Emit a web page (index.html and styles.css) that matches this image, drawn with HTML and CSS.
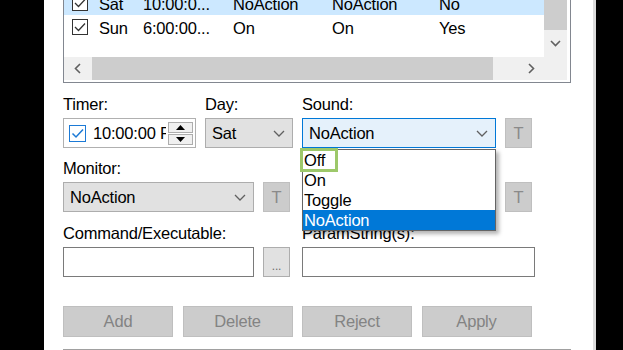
FILE: index.html
```html
<!DOCTYPE html>
<html lang="en">
<head>
  <meta charset="UTF-8" />
  <title>Timer Actions</title>
  <link rel="stylesheet" href="styles.css">
</head>
<body>
  <div class="window">
    <div class="list">
      <div class="rows">
        <div class="row selected">
          <span class="check"><svg width="16" height="16" viewBox="0 0 16 16"><rect x="0.5" y="0.5" width="15" height="15" fill="#fff" stroke="#333"/><polyline points="3,8 6.5,11.5 13,4.5" fill="none" stroke="#333" stroke-width="1.3"/></svg></span>
          <span class="c-day">Sat</span>
          <span class="c-time">10:00:0...</span>
          <span class="c-a1">NoAction</span>
          <span class="c-a2">NoAction</span>
          <span>No</span>
        </div>
        <div class="row">
          <span class="check"><svg width="16" height="16" viewBox="0 0 16 16"><rect x="0.5" y="0.5" width="15" height="15" fill="#fff" stroke="#333"/><polyline points="3,8 6.5,11.5 13,4.5" fill="none" stroke="#333" stroke-width="1.3"/></svg></span>
          <span class="c-day">Sun</span>
          <span class="c-time">6:00:00...</span>
          <span class="c-a1">On</span>
          <span class="c-a2">On</span>
          <span>Yes</span>
        </div>
      </div>
      <div class="vscroll">
        <div class="vthumb"></div>
        <div class="varrow"><svg width="11" height="7" viewBox="0 0 11 7"><polyline points="1,1 5.5,5.5 10,1" fill="none" stroke="#606060" stroke-width="1.6"/></svg></div>
      </div>
      <div class="hscroll">
        <div class="harrow"><svg width="7" height="11" viewBox="0 0 7 11"><polyline points="6,1 1.5,5.5 6,10" fill="none" stroke="#606060" stroke-width="1.6"/></svg></div>
        <div class="hthumb"></div>
        <div class="htrack"></div>
        <div class="harrow"><svg width="7" height="11" viewBox="0 0 7 11"><polyline points="1,1 5.5,5.5 1,10" fill="none" stroke="#606060" stroke-width="1.6"/></svg></div>
      </div>
      <div class="corner"></div>
    </div>

    <div class="form-row first">
      <div class="field w-timer">
        <label>Timer:</label>
        <div class="picker">
          <span class="picker-check"><svg width="17" height="17" viewBox="0 0 17 17"><rect x="0.5" y="0.5" width="16" height="16" fill="#fff" stroke="#1c7ad6"/><polyline points="3.5,8.5 7,12 14,4.5" fill="none" stroke="#1c7ad6" stroke-width="1.5"/></svg></span>
          <span class="picker-text">10:00:00 PM</span>
          <span class="spin">
            <span class="spin-btn"><svg width="9" height="5" viewBox="0 0 9 5"><polygon points="0,5 4.5,0 9,5" fill="#000"/></svg></span>
            <span class="spin-btn"><svg width="9" height="5" viewBox="0 0 9 5"><polygon points="0,0 4.5,5 9,0" fill="#000"/></svg></span>
          </span>
        </div>
      </div>
      <div class="field w-day">
        <label>Day:</label>
        <div class="combo">
          <span>Sat</span>
          <svg class="chev" width="12" height="7" viewBox="0 0 12 7"><polyline points="1,1 6,6 11,1" fill="none" stroke="#606060" stroke-width="1.3"/></svg>
        </div>
      </div>
      <div class="field w-sound">
        <label>Sound:</label>
        <div class="combo open">
          <span>NoAction</span>
          <svg class="chev" width="12" height="7" viewBox="0 0 12 7"><polyline points="1,1 6,6 11,1" fill="none" stroke="#606060" stroke-width="1.3"/></svg>
          <ul class="dropdown">
            <li>Off<span class="focus-ring"></span></li>
            <li>On</li>
            <li>Toggle</li>
            <li class="active">NoAction</li>
          </ul>
        </div>
      </div>
      <button class="t-btn" disabled>T</button>
    </div>

    <div class="form-row">
      <div class="field w-monitor">
        <label>Monitor:</label>
        <div class="combo">
          <span>NoAction</span>
          <svg class="chev" width="12" height="7" viewBox="0 0 12 7"><polyline points="1,1 6,6 11,1" fill="none" stroke="#606060" stroke-width="1.3"/></svg>
        </div>
      </div>
      <button class="t-btn" disabled>T</button>
      <!-- column under the open dropdown, nothing of it shows -->
      <div class="w-sound shifted"></div>
      <button class="t-btn" disabled>T</button>
    </div>

    <div class="form-row third">
      <div class="field w-monitor">
        <label>Command/Executable:</label>
        <input class="textbox" type="text">
      </div>
      <button class="dots-btn">...</button>
      <div class="field w-param shifted">
        <label>ParamString(s):</label>
        <input class="textbox" type="text">
      </div>
    </div>

    <div class="button-group">
      <button class="action-btn" disabled>Add</button>
      <button class="action-btn" disabled>Delete</button>
      <button class="action-btn" disabled>Reject</button>
      <button class="action-btn" disabled>Apply</button>
    </div>

    <div class="separator"></div>
  </div>
</body>
</html>
```

FILE: styles.css
```css
body {
  margin: 0;
  background: #000;
  font-family: "Liberation Sans", Arial, sans-serif;
  font-size: 16.5px;
  letter-spacing: -0.2px;
  color: #000;
  overflow: hidden;
}

.window {
  box-sizing: border-box;
  margin-left: 44px;
  width: 552px;
  height: 350px;
  padding-left: 19px;
  background: #fff;
  border-right: 3px solid #dcdcdc;
  overflow: hidden;
}

/* list view */

.list {
  box-sizing: border-box;
  width: 508px;
  height: 102px;
  margin-top: -19px;
  border: 1px solid #828790;
  display: grid;
  grid-template-columns: 480px 23px 3px;
  grid-template-rows: 75px 23px 2px;
}

.rows {
  padding-top: 9px;
}

.row {
  display: flex;
  align-items: center;
  height: 24px;
  padding-left: 8px;
  white-space: nowrap;
}

.row span {
  padding-top: 2px;
  line-height: 22px;
}

.row.selected {
  background: #cce8ff;
}

.row .check {
  width: 16px;
  height: 16px;
  padding: 0;
  line-height: 0;
  margin-right: 11px;
}

.c-day { width: 44px; }
.c-time { width: 90px; }
.c-a1 { width: 99px; }
.c-a2 { width: 107px; }

.vscroll {
  grid-column: 2;
  grid-row: 1;
  background: #f0f0f0;
  display: flex;
  flex-direction: column;
}

.vthumb {
  height: 48px;
  background: #cdcdcd;
}

.varrow {
  flex: 1;
  display: flex;
  align-items: center;
  justify-content: center;
}

.hscroll {
  grid-column: 1;
  grid-row: 2;
  background: #f0f0f0;
  display: flex;
}

.harrow {
  width: 26px;
  display: flex;
  align-items: center;
  justify-content: center;
}

.hthumb {
  width: 401px;
  margin-left: 2px;
  background: #cdcdcd;
}

.htrack {
  flex: 1;
}

.corner {
  grid-column: 2;
  grid-row: 2;
  background: #f0f0f0;
}

/* form */

.form-row {
  display: flex;
  align-items: flex-end;
  gap: 9px;
  margin-top: 10px;
}

.form-row.first {
  margin-top: 11px;
}

.form-row.third {
  margin-top: 11px;
}

.field {
  display: flex;
  flex-direction: column;
  gap: 4px;
}

.field label {
  line-height: 20px;
  white-space: nowrap;
}

.w-timer { width: 133px; }
.w-day { width: 88px; }
.w-sound { width: 194px; }
.w-monitor { width: 191px; }
.w-param { width: 233px; }

.shifted {
  margin-left: 3px;
}

.picker,
.combo,
.textbox {
  box-sizing: border-box;
  height: 30px;
}

.picker {
  display: flex;
  align-items: center;
  border: 1px solid #b0b0b0;
  background: #fff;
  padding-left: 5px;
}

.picker-check {
  width: 17px;
  height: 17px;
  line-height: 0;
}

.picker-text {
  width: 73px;
  margin-left: 7px;
  overflow: hidden;
  white-space: nowrap;
}

.spin {
  width: 25px;
  height: 23px;
  margin-left: auto;
  margin-right: 2px;
  display: flex;
  flex-direction: column;
  justify-content: space-between;
}

.spin-btn {
  box-sizing: border-box;
  height: 11px;
  border: 1px solid #adadad;
  background: #f0f0f0;
  display: flex;
  align-items: center;
  justify-content: center;
}

.combo {
  position: relative;
  display: flex;
  align-items: center;
  justify-content: space-between;
  padding: 0 7px 0 6px;
  border: 1px solid #adadad;
  background: #e1e1e1;
}

.combo.open {
  border-color: #0078d7;
  background: #e5f1fb;
}

.chev {
  display: block;
}

.dropdown {
  position: absolute;
  top: 30px;
  left: -1px;
  z-index: 5;
  box-sizing: border-box;
  width: 194px;
  margin: 0;
  padding: 0;
  list-style: none;
  background: #fff;
  border: 1px solid #646464;
  box-shadow: 3px 3px 4px rgba(0, 0, 0, 0.3);
}

.dropdown li {
  position: relative;
  height: 20px;
  line-height: 20px;
  padding-left: 1px;
}

.dropdown li.active {
  background: #0078d7;
  color: #fff;
}

.focus-ring {
  position: absolute;
  left: -3px;
  top: -2px;
  width: 38px;
  height: 24px;
  box-sizing: border-box;
  border: 3px solid #9dc86a;
}

.textbox {
  width: 100%;
  margin: 0;
  border: 1px solid #7a7a7a;
  background: #fff;
}

button {
  font-family: inherit;
  font-size: inherit;
  letter-spacing: inherit;
  padding: 0;
  box-sizing: border-box;
}

.t-btn {
  width: 27px;
  height: 30px;
  background: #cccccc;
  border: 1px solid #bfbfbf;
  color: #8a8a8a;
}

.dots-btn {
  width: 27px;
  height: 30px;
  background: #e1e1e1;
  border: 1px solid #adadad;
  color: #6d6d6d;
  font-size: 12px;
  padding-top: 8px;
}

.button-group {
  display: flex;
  gap: 9.5px;
  margin-top: 29px;
}

.action-btn {
  width: 110px;
  height: 31px;
  background: #cccccc;
  border: 1px solid #bfbfbf;
  color: #838383;
}

.separator {
  width: 508px;
  margin-top: 12px;
  border-top: 1px solid #a0a0a0;
}
```
